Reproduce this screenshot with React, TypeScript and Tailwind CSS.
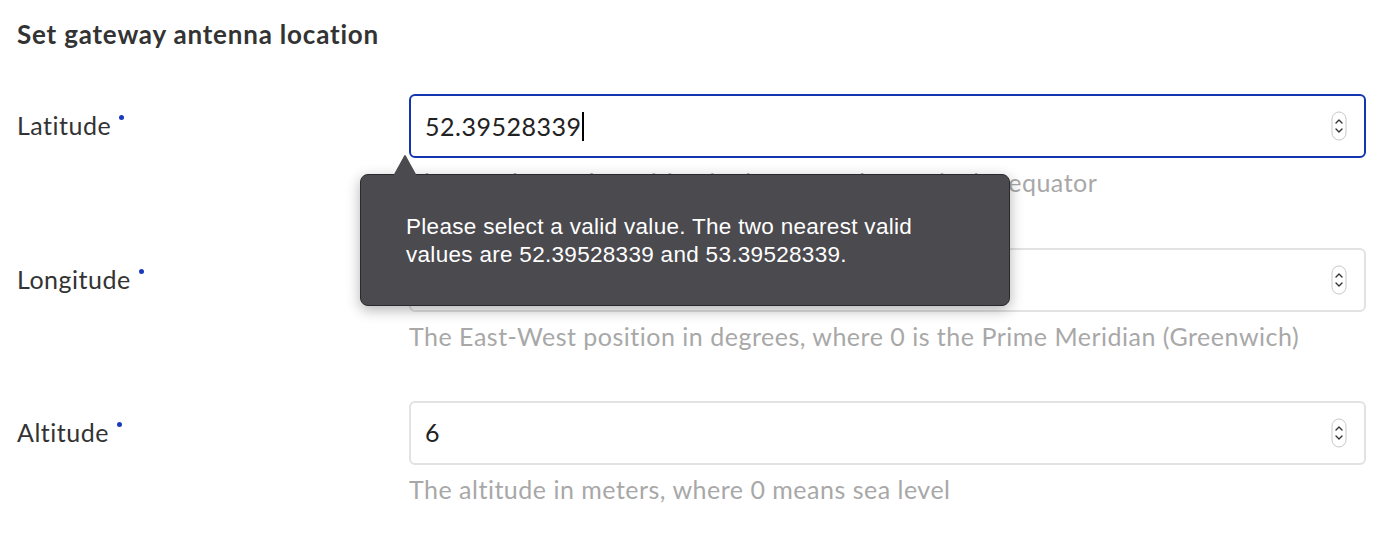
import React from "react";

function Spinner() {
  return (
    <svg width="16" height="30" viewBox="0 0 16 30" className="shrink-0">
      <rect x="1" y="1" width="14" height="28" rx="7" fill="#fff" stroke="#c8c8c8" strokeWidth="1" />
      <path d="M5 12 L8 9 L11 12" fill="none" stroke="#333" strokeWidth="1.4" strokeLinecap="round" strokeLinejoin="round" />
      <path d="M5 18 L8 21 L11 18" fill="none" stroke="#333" strokeWidth="1.4" strokeLinecap="round" strokeLinejoin="round" />
    </svg>
  );
}

function Row({
  label,
  value,
  desc,
  focused,
  children,
}: {
  label: string;
  value: string;
  desc: string;
  focused?: boolean;
  children?: React.ReactNode;
}) {
  return (
    <div className="flex">
      <div className="w-[392px] shrink-0 pt-[13px] text-[25px] tracking-[0.5px] text-[#333]">
        <span>{label}</span>
        <span className="relative -top-[11px] ml-[8px] inline-block h-[5px] w-[5px] rounded-full bg-[#1a3bc0] align-middle"></span>
      </div>
      <div className="relative flex-1">
        <div
          className={
            focused
              ? "flex h-[64px] items-center rounded-[6px] border-2 border-[#1336b0] bg-white pl-[14px] pr-[17px]"
              : "flex h-[64px] items-center rounded-[6px] border-2 border-[#e2e2e2] bg-white pl-[14px] pr-[17px]"
          }
        >
          <span className="flex-1 text-[25px] tracking-[0.5px] text-[#222]">
            {value}
            {focused && <span className="ml-[1px] inline-block h-[29px] w-[2px] translate-y-[5px] bg-black"></span>}
          </span>
          <Spinner />
        </div>
        <div className="mt-[6px] text-[25px] tracking-[0.5px] text-[#a8a8a8]">{desc}</div>
        {children}
      </div>
    </div>
  );
}

export default function App() {
  return (
    <div
      className="h-[536px] w-[1386px] overflow-hidden bg-white pl-[17px] pr-[20px]"
      style={{ fontFamily: "Lato, 'Noto Sans', sans-serif" }}
    >
      <h1 className="pt-[15px] text-[26px] font-bold tracking-[0.8px] text-[#333]">Set gateway antenna location</h1>
      <div className="mt-[40px] flex flex-col gap-[46px]">
        <Row
          label="Latitude"
          value="52.39528339"
          desc="The North-South position in degrees, where 0 is the equator"
          focused
        >
          <div className="absolute left-[-49px] top-[80px] z-10 h-[132px] w-[650px] rounded-[8px] border border-[#2a2a2e] bg-[#4b4a4f] shadow-[0_4px_14px_rgba(0,0,0,0.3)]">
            <svg
              width="40"
              height="22"
              viewBox="0 0 40 22"
              className="absolute left-[24px] top-[-21px]"
            >
              <path d="M0 22 L8 22 L19 2 Q20 0 21 2 L32 22 L40 22" fill="#4b4a4f" />
            </svg>
            <div
              className="px-[45px] pt-[38px] text-[22.5px] leading-[28px] text-white"
              style={{ fontFamily: "'Liberation Sans', Arial, sans-serif", letterSpacing: "0.3px" }}
            >
              Please select a valid value. The two nearest valid
              <br />
              values are 52.39528339 and 53.39528339.
            </div>
          </div>
        </Row>
        <Row
          label="Longitude"
          value=""
          desc="The East-West position in degrees, where 0 is the Prime Meridian (Greenwich)"
        />
        <Row label="Altitude" value="6" desc="The altitude in meters, where 0 means sea level" />
      </div>
    </div>
  );
}
